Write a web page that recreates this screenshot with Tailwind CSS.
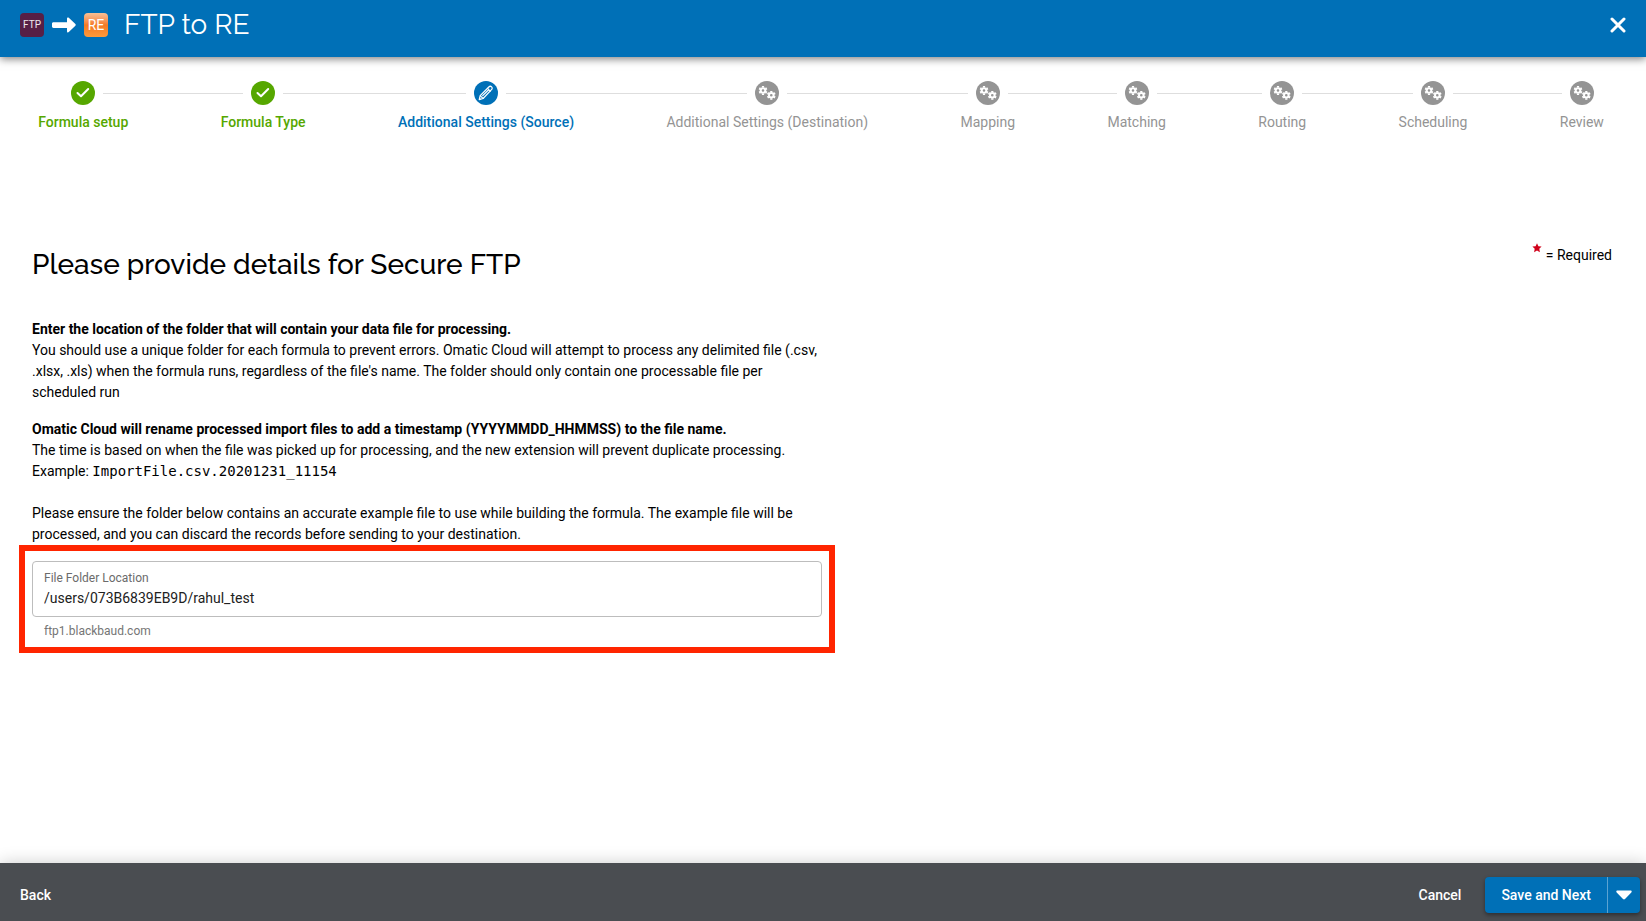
<!DOCTYPE html>
<html lang="en">
<head>
  <meta charset="UTF-8">
  <meta name="viewport" content="width=device-width, initial-scale=1.0">
  <title>FTP to RE</title>
  <script src="https://cdn.jsdelivr.net/npm/@tailwindcss/browser@4"></script>
</head>
<body class="flex min-h-screen flex-col overflow-x-hidden bg-white font-[Roboto,sans-serif] text-sm text-black">
  <!-- Shared icons -->
  <svg class="hidden" aria-hidden="true">
    <symbol id="icon-check" viewBox="0 0 24 24">
      <path d="M6.500 12l3.500 3.300 7.200-7.300" fill="none" stroke="currentColor" stroke-width="2" stroke-linecap="round" stroke-linejoin="round"/>
    </symbol>
    <symbol id="icon-pencil" viewBox="0 0 24 24">
      <g fill="none" stroke="currentColor" stroke-width="1.200" stroke-linecap="round" stroke-linejoin="round">
        <path d="M5.200 18.600l1-4L14.800 6c.9-.9 2-.9 2.800-.1s.8 1.900-.1 2.800l-8.400 8.800z"/>
        <path d="M6.400 14.800l2.600 2.600M8.700 14.700l6.200-6.200M13.500 7.300l2.800 2.800"/>
      </g>
      <path d="M5 18.800l.5-2.200 1.600 1.600z" fill="currentColor"/>
    </symbol>
    <symbol id="gear" viewBox="-5 -5 10 10">
      <circle r="2.300" fill="none" stroke="currentColor" stroke-width="2"/>
      <path d="M0-4.400V-3M0 4.400V3M3.800-2.200l-1.200.7M-3.800 2.200l1.200-.7M3.800 2.200l-1.200-.7M-3.800-2.200l1.200.7" stroke="currentColor" stroke-width="2.200"/>
    </symbol>
    <symbol id="icon-gears" viewBox="0 0 24 24">
      <use href="#gear" x="3" y="4.500" width="10" height="10"/>
      <use href="#gear" x="11.300" y="9.300" width="10" height="10"/>
    </symbol>
  </svg>

  <!-- Header -->
  <header class="flex h-[57px] items-start justify-between bg-[#0070b7] px-5 pt-[5px] text-white shadow-[0_2px_8px_rgba(0,0,0,0.5)]">
    <div class="flex h-10 items-center">
      <span class="flex size-6 items-center justify-center rounded-[4px] bg-[#571f46] text-[10px] text-white/90">FTP</span>
      <svg class="ml-2 h-4 w-6" viewBox="0 0 24 16" fill="currentColor" aria-hidden="true">
        <path d="M1.500 5.200H15V1.600c0-1.200 1-1.600 1.800-.8l6.600 6.300c.5.500.5 1.100 0 1.600l-6.600 6.300c-.8.800-1.800.4-1.800-.8V10.900H1.500C.6 10.900 0 10.300 0 9.500V6.600c0-.8.6-1.400 1.500-1.400z"/>
      </svg>
      <span class="ml-2 flex size-6 items-center justify-center rounded-[4px] bg-linear-to-b from-[#f9c095] via-[#f47a24] via-50% to-[#ff9a3a] text-sm">RE</span>
      <h1 class="ml-4 font-[Raleway,Lato,sans-serif] text-[28px] leading-10">FTP to RE</h1>
    </div>
    <button type="button" aria-label="Close" class="flex h-10 w-4 items-center justify-center">
      <svg class="size-4 shrink-0" viewBox="0 0 16 16" fill="none" stroke="currentColor" stroke-width="3" stroke-linecap="round" aria-hidden="true">
        <path d="M2 2l12 12M14 2L2 14"/>
      </svg>
    </button>
  </header>

  <!-- Steps -->
  <nav aria-label="Progress" class="pt-6">
    <ol class="-mr-1 -ml-2 flex leading-5 whitespace-nowrap text-[#949494]">
      <li class="flex flex-auto flex-col items-center gap-[7px] font-medium text-[#56a700]">
        <div class="flex w-full items-center gap-2">
          <span class="flex-1"></span>
          <span class="size-6 rounded-full bg-[#56a700] text-white"><svg class="size-6"><use href="#icon-check"/></svg></span>
          <span class="h-px flex-1 bg-[#dedede]"></span>
        </div>
        <span>Formula setup</span>
      </li>
      <li class="flex flex-auto flex-col items-center gap-[7px] font-medium text-[#56a700]">
        <div class="flex w-full items-center gap-2">
          <span class="h-px flex-1 bg-[#dedede]"></span>
          <span class="size-6 rounded-full bg-[#56a700] text-white"><svg class="size-6"><use href="#icon-check"/></svg></span>
          <span class="h-px flex-1 bg-[#dedede]"></span>
        </div>
        <span>Formula Type</span>
      </li>
      <li aria-current="step" class="flex flex-auto flex-col items-center gap-[7px] font-medium text-[#0070b7]">
        <div class="flex w-full items-center gap-2">
          <span class="h-px flex-1 bg-[#dedede]"></span>
          <span class="size-6 rounded-full bg-[#0070b7] text-white"><svg class="size-6"><use href="#icon-pencil"/></svg></span>
          <span class="h-px flex-1 bg-[#dedede]"></span>
        </div>
        <span>Additional Settings (Source)</span>
      </li>
      <li class="flex flex-auto flex-col items-center gap-[7px]">
        <div class="flex w-full items-center gap-2">
          <span class="h-px flex-1 bg-[#dedede]"></span>
          <span class="size-6 rounded-full bg-[#949494] text-white"><svg class="size-6"><use href="#icon-gears"/></svg></span>
          <span class="h-px flex-1 bg-[#dedede]"></span>
        </div>
        <span>Additional Settings (Destination)</span>
      </li>
      <li class="flex flex-auto flex-col items-center gap-[7px]">
        <div class="flex w-full items-center gap-2">
          <span class="h-px flex-1 bg-[#dedede]"></span>
          <span class="size-6 rounded-full bg-[#949494] text-white"><svg class="size-6"><use href="#icon-gears"/></svg></span>
          <span class="h-px flex-1 bg-[#dedede]"></span>
        </div>
        <span>Mapping</span>
      </li>
      <li class="flex flex-auto flex-col items-center gap-[7px]">
        <div class="flex w-full items-center gap-2">
          <span class="h-px flex-1 bg-[#dedede]"></span>
          <span class="size-6 rounded-full bg-[#949494] text-white"><svg class="size-6"><use href="#icon-gears"/></svg></span>
          <span class="h-px flex-1 bg-[#dedede]"></span>
        </div>
        <span>Matching</span>
      </li>
      <li class="flex flex-auto flex-col items-center gap-[7px]">
        <div class="flex w-full items-center gap-2">
          <span class="h-px flex-1 bg-[#dedede]"></span>
          <span class="size-6 rounded-full bg-[#949494] text-white"><svg class="size-6"><use href="#icon-gears"/></svg></span>
          <span class="h-px flex-1 bg-[#dedede]"></span>
        </div>
        <span>Routing</span>
      </li>
      <li class="flex flex-auto flex-col items-center gap-[7px]">
        <div class="flex w-full items-center gap-2">
          <span class="h-px flex-1 bg-[#dedede]"></span>
          <span class="size-6 rounded-full bg-[#949494] text-white"><svg class="size-6"><use href="#icon-gears"/></svg></span>
          <span class="h-px flex-1 bg-[#dedede]"></span>
        </div>
        <span>Scheduling</span>
      </li>
      <li class="flex flex-auto flex-col items-center gap-[7px]">
        <div class="flex w-full items-center gap-2">
          <span class="h-px flex-1 bg-[#dedede]"></span>
          <span class="size-6 rounded-full bg-[#949494] text-white"><svg class="size-6"><use href="#icon-gears"/></svg></span>
          <span class="flex-1"></span>
        </div>
        <span>Review</span>
      </li>
    </ol>
  </nav>

  <!-- Form -->
  <main class="flex-1 pt-[109px] pr-[34px] pl-8">
    <div class="flex items-start justify-between">
      <h2 class="pt-1 font-[Raleway,Lato,sans-serif] text-[28px] leading-10 font-medium">Please provide details for Secure FTP</h2>
      <p class="flex items-start gap-1 pt-0.5 leading-5">
        <svg class="size-2.5" viewBox="0 0 10 10" fill="#d0021b" aria-hidden="true">
          <path d="M5 .3l1.400 2.900 3.200.4-2.300 2.200.6 3.400L5 7.600 2.100 9.200l.6-3.400L.4 3.600l3.200-.4z"/>
        </svg>
        <span class="pt-0.5">= Required</span>
      </p>
    </div>

    <div class="w-1/2 pt-[34px] leading-[21px]">
      <p><strong class="font-bold">Enter the location of the folder that will contain your data file for processing.</strong><br>
        You should use a unique folder for each formula to prevent errors. Omatic Cloud will attempt to process any delimited file (.csv, .xlsx, .xls) when the formula runs, regardless of the file's name. The folder should only contain one processable file per scheduled run</p>
      <p class="mt-4"><strong class="font-bold">Omatic Cloud will rename processed import files to add a timestamp (YYYYMMDD_HHMMSS) to the file name.</strong><br>
        The time is based on when the file was picked up for processing, and the new extension will prevent duplicate processing.<br>
        Example: <code class="font-['DejaVu_Sans_Mono',monospace]">ImportFile.csv.20201231_11154</code></p>
      <p class="mt-[21px]">Please ensure the folder below contains an accurate example file to use while building the formula. The example file will be processed, and you can discard the records before sending to your destination.</p>

      <div class="-mx-[13px] border-6 border-[#ff2500] px-[7px] pt-[10px] pb-1.5">
        <div class="h-14 rounded-[4px] border border-[#bdbdbd] px-[11px] pt-2">
          <label for="folder" class="block text-xs leading-4 text-[#6b6b6b]">File Folder Location</label>
          <input id="folder" type="text" value="/users/073B6839EB9D/rahul_test" aria-describedby="folder-hint" class="block h-6 w-full text-sm text-[#212121] outline-none">
        </div>
        <p id="folder-hint" class="px-3 pt-1 text-xs leading-5 text-[#757575]">ftp1.blackbaud.com</p>
      </div>
    </div>
  </main>

  <!-- Footer actions -->
  <footer class="flex h-[58px] items-center justify-between bg-[#4a4d51] pt-1.5 pr-1.5 pl-5 font-medium text-white shadow-[0_0_16px_rgba(0,0,0,0.2)]">
    <button type="button">Back</button>
    <div class="flex items-center">
      <button type="button" class="mr-6">Cancel</button>
      <div class="flex h-9 rounded-[4px] bg-[#0070b7] shadow-[0_2px_4px_rgba(0,0,0,0.4)]">
        <button type="button" class="px-4">Save and Next</button>
        <button type="button" aria-label="More save options" class="flex w-[33px] items-center justify-center border-l border-[#5aa3d2]">
          <svg class="h-2.5 w-4" viewBox="0 0 16 10" fill="currentColor" aria-hidden="true">
            <path d="M1.500.5h13c1.200 0 1.600 1.200.8 2L9 9c-.6.600-1.400.6-2 0L.7 2.500C-.1 1.700.3.5 1.500.5z"/>
          </svg>
        </button>
      </div>
    </div>
  </footer>
</body>
</html>
